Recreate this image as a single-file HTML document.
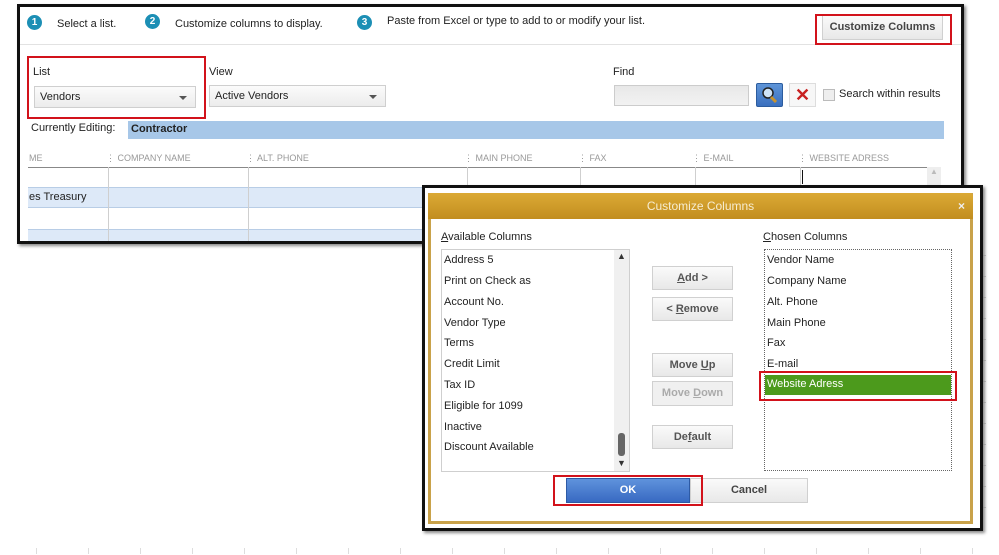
<!DOCTYPE html>
<html><head><meta charset="utf-8"><style>
*{margin:0;padding:0;box-sizing:border-box}
body{width:999px;height:555px;background:#fff;position:relative;overflow:hidden;font-family:"Liberation Sans",Arial,sans-serif;font-size:11px;color:#222}
.a{position:absolute}
.num{width:15px;height:15px;border-radius:50%;background:#1c8fb5;color:#fff;font-size:10px;font-weight:bold;text-align:center;line-height:15px}
.combo{border:1px solid #cfcfcf;background:linear-gradient(#fbfbfb,#ececec);height:22px;padding:4px 5px;font-size:11px}
.tri{position:absolute;right:8px;top:9px;border-left:4px solid transparent;border-right:4px solid transparent;border-top:4px solid #555}
.red{border:2px solid #d2121b}
.vl{width:1px;background:#cfcfcf}
.hd{font-size:9px;color:#999;top:153px}
.btn{border:1px solid #d0d0d0;background:linear-gradient(#fafafa,#e8e8e8);text-align:center;font-weight:bold;color:#555;font-size:11px;line-height:22px}
.it{left:444px;font-size:11px;color:#222}
.ci{left:767px;font-size:11px;color:#222}
</style></head><body>
<div class="a" style="left:17px;top:4px;width:947px;height:240px;border:3px solid #111;background:#fff;box-shadow:2px 2px 3px #888"></div>
<div class="a" style="left:20px;top:44px;width:941px;height:1px;background:#e2e2e2"></div>
<div class="a num" style="left:27px;top:15px">1</div>
<div class="a" style="left:57px;top:18px">Select a list.</div>
<div class="a num" style="left:145px;top:14px">2</div>
<div class="a" style="left:175px;top:18px">Customize columns to display.</div>
<div class="a num" style="left:357px;top:15px">3</div>
<div class="a" style="left:387px;top:15px">Paste from Excel or type to add to or modify your list.</div>
<div class="a btn" style="left:822px;top:15px;width:121px;height:25px;line-height:23px;color:#444">Customize Columns</div>
<div class="a red" style="left:815px;top:14px;width:137px;height:31px"></div>

<div class="a" style="left:33px;top:66px">List</div>
<div class="a combo" style="left:34px;top:86px;width:162px">Vendors<span class="tri"></span></div>
<div class="a red" style="left:27px;top:56px;width:179px;height:63px"></div>
<div class="a" style="left:209px;top:66px">View</div>
<div class="a combo" style="left:209px;top:85px;width:177px">Active Vendors<span class="tri"></span></div>
<div class="a" style="left:613px;top:66px">Find</div>
<div class="a" style="left:614px;top:85px;width:135px;height:21px;border:1px solid #ccc;background:linear-gradient(#e8e8e8,#f2f2f2)"></div>
<div class="a" style="left:756px;top:83px;width:27px;height:24px;border:1px solid #2c5c9e;background:linear-gradient(#5f95d8,#3a6fbe);border-radius:2px"><svg width="25" height="22"><circle cx="11" cy="9" r="5" fill="#cfe3f7" stroke="#222" stroke-width="1.5"/><line x1="14" y1="13" x2="19" y2="18" stroke="#c9932d" stroke-width="3"/></svg></div>
<div class="a" style="left:789px;top:83px;width:27px;height:24px;border:1px solid #ddd;background:#f7f7f7;color:#c82020;font-size:18px;font-weight:bold;text-align:center;line-height:22px">✕</div>
<div class="a" style="left:823px;top:89px;width:12px;height:12px;border:1px solid #bbb;background:#eee"></div>
<div class="a" style="left:839px;top:88px">Search within results</div>

<div class="a" style="left:31px;top:122px">Currently Editing:</div>
<div class="a" style="left:128px;top:121px;width:816px;height:18px;background:#a7c7e8;font-weight:bold;padding:2px 3px">Contractor</div>

<div class="a hd" style="left:29px">ME</div>
<div class="a hd" style="left:106px">⋮ COMPANY NAME</div>
<div class="a hd" style="left:246px">⋮ ALT. PHONE</div>
<div class="a hd" style="left:464px">⋮ MAIN PHONE</div>
<div class="a hd" style="left:578px">⋮ FAX</div>
<div class="a hd" style="left:692px">⋮ E-MAIL</div>
<div class="a hd" style="left:798px">⋮ WEBSITE ADRESS</div>
<div class="a" style="left:28px;top:167px;width:899px;height:1px;background:#888"></div>
<div class="a" style="left:28px;top:187px;width:899px;height:21px;background:#dde9f8;border-top:1px solid #b8cde6;border-bottom:1px solid #b8cde6"></div>
<div class="a" style="left:28px;top:229px;width:899px;height:12px;background:#dde9f8;border-top:1px solid #b8cde6"></div>
<div class="a vl" style="left:108px;top:167px;height:74px"></div>
<div class="a vl" style="left:248px;top:167px;height:74px"></div>
<div class="a vl" style="left:467px;top:167px;height:74px"></div>
<div class="a vl" style="left:580px;top:167px;height:20px"></div>
<div class="a vl" style="left:695px;top:167px;height:20px"></div>
<div class="a vl" style="left:800px;top:167px;height:20px"></div>
<div class="a" style="left:802px;top:170px;width:1px;height:14px;background:#111"></div>
<div class="a" style="left:927px;top:167px;width:14px;height:20px;background:#eee;color:#bbb;font-size:8px;text-align:center">▲</div>
<div class="a" style="left:29px;top:191px">es Treasury</div>

<div class="a" style="left:972px;top:235px;width:14px;height:290px;background:repeating-linear-gradient(#fff 0 20px,#ccc 20px 21px)"></div>

<div class="a" style="left:422px;top:185px;width:561px;height:346px;border:3px solid #111;background:#fff;box-shadow:2px 2px 3px #888"></div>
<div class="a" style="left:428px;top:193px;width:545px;height:331px;border:3px solid #c9a24a;border-top:none;background:#fff"></div>
<div class="a" style="left:428px;top:193px;width:545px;height:26px;background:linear-gradient(#dcaa35,#c28d1f);border-radius:3px 3px 0 0;color:#f6ecd0;text-align:center;line-height:27px;font-size:12px">Customize Columns<span style="position:absolute;right:8px;font-weight:bold;color:#eee">×</span></div>

<div class="a" style="left:441px;top:231px"><u>A</u>vailable Columns</div>
<div class="a" style="left:441px;top:249px;width:189px;height:223px;border:1px solid #cfcfcf"></div>
<div class="a" style="left:614px;top:250px;width:15px;height:221px;background:#f0f0f0"></div>
<div class="a" style="left:617px;top:251px;font-size:9px;color:#333">▲</div>
<div class="a" style="left:617px;top:458px;font-size:9px;color:#333">▼</div>
<div class="a" style="left:618px;top:433px;width:7px;height:23px;border-radius:3px;background:#666"></div>
<div class="a it" style="top:254px">Address 5</div>
<div class="a it" style="top:275px">Print on Check as</div>
<div class="a it" style="top:296px">Account No.</div>
<div class="a it" style="top:317px">Vendor Type</div>
<div class="a it" style="top:337px">Terms</div>
<div class="a it" style="top:358px">Credit Limit</div>
<div class="a it" style="top:379px">Tax ID</div>
<div class="a it" style="top:400px">Eligible for 1099</div>
<div class="a it" style="top:421px">Inactive</div>
<div class="a it" style="top:441px">Discount Available</div>

<div class="a btn" style="left:652px;top:266px;width:81px;height:24px"><u>A</u>dd &gt;</div>
<div class="a btn" style="left:652px;top:297px;width:81px;height:24px">&lt; <u>R</u>emove</div>
<div class="a btn" style="left:652px;top:353px;width:81px;height:24px">Move <u>U</u>p</div>
<div class="a btn" style="left:652px;top:381px;width:81px;height:25px;color:#aaa;background:#f0f0f0">Move <u>D</u>own</div>
<div class="a btn" style="left:652px;top:425px;width:81px;height:24px">De<u>f</u>ault</div>

<div class="a" style="left:763px;top:231px"><u>C</u>hosen Columns</div>
<div class="a" style="left:764px;top:249px;width:188px;height:222px;border:1px dotted #666"></div>
<div class="a ci" style="top:254px">Vendor Name</div>
<div class="a ci" style="top:275px">Company Name</div>
<div class="a ci" style="top:296px">Alt. Phone</div>
<div class="a ci" style="top:317px">Main Phone</div>
<div class="a ci" style="top:337px">Fax</div>
<div class="a ci" style="top:358px">E-mail</div>
<div class="a" style="left:765px;top:375px;width:186px;height:20px;background:#4c9a1c;color:#fff;padding:3px 2px">Website Adress</div>
<div class="a red" style="left:759px;top:371px;width:198px;height:30px"></div>

<div class="a" style="left:566px;top:478px;width:124px;height:25px;background:linear-gradient(#5f93dc,#3869c2);border:1px solid #2d5aa5;color:#fff;font-weight:bold;text-align:center;line-height:23px">OK</div>
<div class="a btn" style="left:690px;top:478px;width:118px;height:25px;color:#444;font-weight:bold">Cancel</div>
<div class="a red" style="left:553px;top:475px;width:150px;height:31px"></div>

<div class="a" style="left:0;top:548px;width:999px;height:6px;background:repeating-linear-gradient(90deg,transparent 0 36px,#ddd 36px 37px,transparent 37px 52px)"></div>
</body></html>
